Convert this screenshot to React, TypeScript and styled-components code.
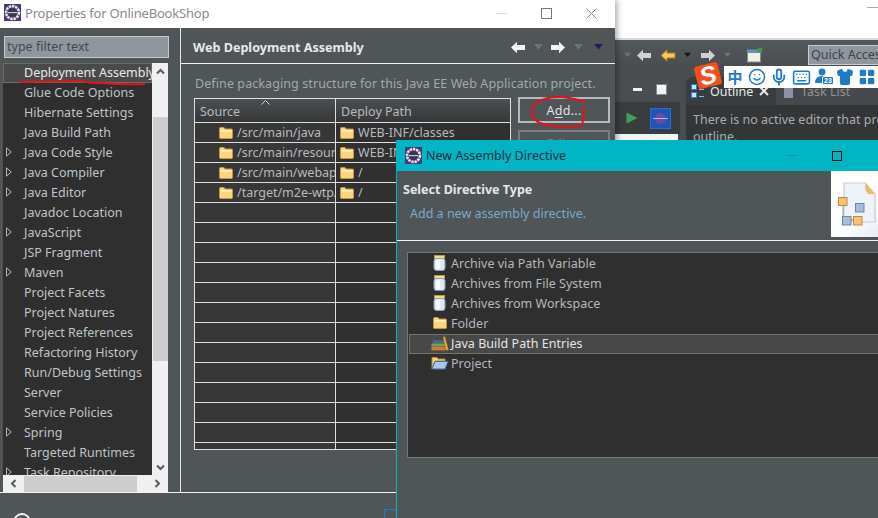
import styled, { createGlobalStyle } from "styled-components";
import { Keyboard, LayoutGrid, Mic, Shirt, Smile } from "lucide-react";

const GlobalStyle = createGlobalStyle`
  html, body {
    margin: 0;
    padding: 0;
    background: #505558;
  }
  * {
    box-sizing: border-box;
  }
  svg {
    flex: none;
  }
`;

const Desktop = styled.div`
  position: relative;
  width: 878px;
  height: 518px;
  overflow: hidden;
  background: #505558;
  font-family: "Noto Sans", "Open Sans", sans-serif;
  font-size: 12.5px;
`;

/* workbench window behind the dialogs */
const Workbench = styled.div`
  position: absolute;
  inset: 0;
  display: flex;
  flex-direction: column;
`;

const WorkbenchTitle = styled.div`
  height: 40px;
  flex: none;
  background: #fff;
  border-bottom: 2px solid #d8dadb;
  display: flex;
  justify-content: flex-end;
  padding: 7px 0 0 0;
`;

const MinDash = styled.div<{ $color: string }>`
  width: 11px;
  height: 1px;
  background: ${(p) => p.$color};
`;

const Toolbar = styled.div`
  height: 25px;
  flex: none;
  background: linear-gradient(#53585a, #4a4e50);
  padding: 5px 0 0 624px;
  display: flex;
  align-items: center;
`;

const ToolSlot = styled.div<{ $w: number }>`
  width: ${(p) => p.$w}px;
  flex: none;
  display: flex;
  align-items: center;
`;

const ToolDivider = styled.div`
  width: 1px;
  height: 20px;
  background: #85898b;
  margin-right: 8px;
`;

const QuickAccess = styled.div`
  margin-left: 45px;
  margin-top: 0;
  width: 90px;
  height: 20px;
  flex: none;
  background: #8f969e;
  border: 1px solid #c8cccf;
  color: #3d4246;
  font-size: 12.5px;
  line-height: 17px;
  padding-left: 2px;
  white-space: nowrap;
`;

const WorkArea = styled.div`
  flex: 1;
  display: flex;
  padding: 12px 0 0 615px;
  background: #494d4f;
  gap: 6px;
`;

const SideStack = styled.div`
  width: 65px;
  flex: none;
  display: flex;
  flex-direction: column;
`;

const SideTabs = styled.div`
  height: 25px;
  flex: none;
  display: flex;
  align-items: center;
  gap: 15px;
  padding: 0 0 0 18px;
  background: #4a4e50;
  border-top-right-radius: 8px;
`;

const MiniLine = styled.div`
  width: 9px;
  height: 3px;
  background: #f2f2f2;
`;

const MiniBox = styled.div`
  width: 9px;
  height: 9px;
  background: #f2f2f2;
  border-top: 3px solid #fff;
  outline: 1px solid #888;
`;

const SideRun = styled.div`
  height: 32px;
  flex: none;
  background: #3a3d40;
  display: flex;
  align-items: center;
  gap: 12px;
  padding-left: 11px;
`;

const SideStrip = styled.div`
  height: 8px;
  width: 63px;
  flex: none;
  background: #f4f4f4;
`;

const OutlinePanel = styled.div`
  flex: 1;
  display: flex;
  flex-direction: column;
  background: #333537;
  border-top-left-radius: 8px;
  overflow: hidden;
`;

const TabStrip = styled.div`
  height: 28px;
  flex: none;
  display: flex;
  background: #46494b;
`;

const ActiveTab = styled.div`
  width: 90px;
  display: flex;
  align-items: center;
  gap: 6px;
  padding: 0 0 0 5px;
  background: #3a3d3f;
  color: #e6e8e9;
  font-size: 12.5px;
`;

const IdleTab = styled.div`
  display: flex;
  align-items: center;
  gap: 8px;
  padding: 0 0 0 8px;
  color: #8f9396;
  font-size: 12.5px;
`;

const OutlineText = styled.div`
  padding: 6px 0 0 7px;
  color: #a9acae;
  font-size: 12.5px;
  line-height: 17px;
  width: 192px;
  white-space: nowrap;
`;

/* sogou input bar */
const ImeBar = styled.div`
  position: absolute;
  left: 724px;
  top: 66px;
  width: 154px;
  height: 22px;
  background: #fff;
  display: flex;
  align-items: center;
`;

const ImeLogo = styled.div`
  position: absolute;
  left: -28px;
  top: -2px;
  width: 24px;
  height: 23px;
  background: #f2511f;
  border-radius: 3px;
  transform: rotate(-14deg);
  color: #fff;
  font-family: "Liberation Sans", sans-serif;
  font-size: 25px;
  font-weight: 700;
  font-style: italic;
  line-height: 23px;
  text-align: center;
`;

const ImeSlot = styled.div`
  position: relative;
  width: 22px;
  flex: none;
  display: flex;
  justify-content: center;
  color: #1f78c8;
`;

const ImeChar = styled.span`
  font-family: "Noto Sans CJK SC", sans-serif;
  font-size: 15px;
  font-weight: 700;
  line-height: 20px;
`;

const ImeBadge = styled.span`
  position: absolute;
  left: 10px;
  top: 8px;
  width: 12px;
  height: 9px;
  background: #1f78c8;
  border: 1px solid #fff;
  border-radius: 2px;
  color: #fff;
  font-family: "Liberation Sans", sans-serif;
  font-size: 7px;
  font-weight: 700;
  line-height: 7px;
  text-align: center;
`;

/* properties window */
const PropertiesWindow = styled.div`
  position: absolute;
  left: 0;
  top: 0;
  width: 615px;
  height: 518px;
  background: #505558;
  box-shadow: 2px 0 6px rgba(0, 0, 0, 0.35);
  display: flex;
  flex-direction: column;
`;

const TitleBar = styled.div`
  height: 28px;
  flex: none;
  background: #fff;
  display: flex;
  align-items: center;
  gap: 4px;
  padding: 0 0 3px 4px;
  color: #8a8a8a;
  font-size: 13px;
  letter-spacing: -0.2px;
`;

const WinButtons = styled.div`
  margin-left: auto;
  margin-top: 1px;
  display: flex;
  align-items: center;
  gap: 34px;
  padding-right: 18px;
`;

const WinSquare = styled.div`
  width: 11px;
  height: 11px;
  border: 1px solid #777;
`;

const PropBody = styled.div`
  height: 465px;
  flex: none;
  display: flex;
  border-bottom: 1px solid #f2f2f2;
`;

const Sidebar = styled.div`
  width: 181px;
  flex: none;
  border-right: 1px solid #e8e8e8;
  padding: 8px 0 0 3px;
  display: flex;
  flex-direction: column;
`;

const FilterInput = styled.div`
  width: 165px;
  height: 22px;
  flex: none;
  margin-left: 1px;
  background: #8f969e;
  border: 1px solid #c6cacd;
  color: #444a50;
  font-size: 12.5px;
  line-height: 19px;
  padding-left: 2px;
`;

const TreeBox = styled.div`
  margin-top: 5px;
  height: 412px;
  width: 165px;
  flex: none;
  display: flex;
`;

const TreeList = styled.div`
  width: 149px;
  flex: none;
  overflow: hidden;
  background: #2f2f2f;
`;

const TreeRow = styled.div<{ $selected?: boolean }>`
  height: 20px;
  display: flex;
  align-items: center;
  padding: 0 0 2px 3px;
  color: ${(p) => (p.$selected ? "#e9e9e9" : "#bfc4c7")};
  background: ${(p) => (p.$selected ? "#4a4a4a" : "transparent")};
  box-shadow: ${(p) => (p.$selected ? "inset 0 0 0 1px #6d6d5e" : "none")};
  white-space: nowrap;
`;

const TreeArrow = styled.div`
  width: 18px;
  flex: none;
  display: flex;
  align-items: center;
`;

const ScrollV = styled.div`
  width: 16px;
  flex: none;
  background: #f0f0f0;
  display: flex;
  flex-direction: column;
  align-items: center;
  padding-top: 5px;
`;

const ScrollThumbV = styled.div`
  width: 15px;
  height: 244px;
  margin: 42px 0 0 1px;
  flex: none;
  background: #cdcdcd;
`;

const ScrollDown = styled.div`
  display: flex;
  margin-top: 103px;
`;

const ScrollH = styled.div`
  width: 165px;
  height: 17px;
  flex: none;
  background: #f0f0f0;
  display: flex;
  align-items: center;
  padding: 0 6px 0 6px;
`;

const ScrollThumbH = styled.div`
  width: 113px;
  height: 16px;
  margin: 0 auto 0 6px;
  background: #cdcdcd;
`;

const Main = styled.div`
  flex: 1;
  min-width: 0;
  display: flex;
  flex-direction: column;
`;

const PageHead = styled.div`
  height: 36px;
  flex: none;
  border-bottom: 1px solid #f0f0f0;
  display: flex;
  align-items: center;
  padding: 3px 7px 0 12px;
  color: #e8e9ea;
  font-size: 12.6px;
  font-weight: 700;
`;

const NavIcons = styled.div`
  margin-left: auto;
  display: flex;
  align-items: center;
`;

const NavSlot = styled.div`
  width: 20px;
  flex: none;
  display: flex;
  justify-content: center;
`;

const PageContent = styled.div`
  flex: 1;
  padding: 11px 5px 0 13px;
`;

const Description = styled.div`
  color: #a3a8ac;
  line-height: 18px;
  letter-spacing: 0.09px;
  margin-left: 1px;
  white-space: nowrap;
`;

const TableRowWrap = styled.div`
  display: flex;
  margin-top: 5px;
  gap: 7px;
`;

const Table = styled.div`
  width: 317px;
  height: 352px;
  flex: none;
  border: 1px solid #dedede;
  overflow: hidden;
`;

const Row = styled.div<{ $head?: boolean }>`
  height: ${(p) => (p.$head ? 24 : 20)}px;
  display: grid;
  grid-template-columns: 141px 1fr;
  border-bottom: 1px solid #dedede;
  background: ${(p) => (p.$head ? "linear-gradient(#4c5052, #353739)" : "transparent")};
`;

const Cell = styled.div<{ $first?: boolean; $head?: boolean }>`
  position: relative;
  display: flex;
  align-items: center;
  min-width: 0;
  overflow: hidden;
  white-space: nowrap;
  gap: 4px;
  padding-left: ${(p) => (p.$head ? 5 : p.$first ? 24 : 4)}px;
  padding-top: ${(p) => (p.$head ? 1 : 0)}px;
  border-right: ${(p) => (p.$first ? "1px solid #dedede" : "none")};
  color: #b6bbbf;
  background: ${(p) => (p.$head ? "transparent" : p.$first ? "#373738" : "#303031")};
`;

const SortCaret = styled.div`
  position: absolute;
  left: 66px;
  top: 1px;
  display: flex;
`;

const ButtonColumn = styled.div`
  width: 92px;
  flex: none;
  margin-top: -1px;
  display: flex;
  flex-direction: column;
  gap: 7px;
`;

const PushButton = styled.div<{ $disabled?: boolean }>`
  height: 26px;
  border: 2px solid ${(p) => (p.$disabled ? "#7b7f82" : "#b8bbbd")};
  color: ${(p) => (p.$disabled ? "#777b7e" : "#dfe1e2")};
  display: flex;
  align-items: center;
  justify-content: center;
  letter-spacing: 0.3px;
  u {
    text-underline-offset: 2px;
  }
`;

const Footer = styled.div`
  flex: 1;
  display: flex;
  align-items: flex-start;
  padding: 20px 0 0 13px;
`;

const DefaultButton = styled.div`
  width: 100px;
  height: 26px;
  margin: -4px 0 0 353px;
  border: 1px solid #1f78d0;
`;

const Annotation = styled.svg`
  position: absolute;
  left: 0;
  top: 0;
  pointer-events: none;
`;

/* directive dialog */
const Dialog = styled.div`
  position: absolute;
  left: 396px;
  top: 140px;
  width: 482px;
  height: 378px;
  overflow: hidden;
  background: #505558;
  border-left: 1px solid #01b5c5;
  display: flex;
  flex-direction: column;
`;

const DialogTitle = styled.div`
  height: 31px;
  flex: none;
  background: #01b5c5;
  display: flex;
  align-items: center;
  gap: 4px;
  padding-left: 8px;
  color: #0b2f35;
`;

const DialogButtons = styled.div`
  margin-left: auto;
  display: flex;
  align-items: center;
  gap: 34px;
  padding-right: 36px;
`;

const BlackSquare = styled.div`
  width: 10px;
  height: 10px;
  border: 1px solid #000;
`;

const DialogHead = styled.div`
  height: 70px;
  flex: none;
  display: flex;
  justify-content: space-between;
  border-bottom: 1px solid #f0f0f0;
`;

const HeadText = styled.div`
  padding: 10px 0 0 6px;
`;

const HeadTitle = styled.div`
  color: #e6e7e8;
  font-weight: 700;
  line-height: 18px;
`;

const HeadSub = styled.div`
  margin: 6px 0 0 7px;
  color: #7ba9c4;
  line-height: 18px;
`;

const HeadImage = styled.div`
  width: 47px;
  height: 66px;
  background: linear-gradient(135deg, #fff 60%, #e8ebf8);
  padding-top: 11px;
`;

const DirectiveList = styled.div`
  margin: 11px -10px 0 10px;
  height: 206px;
  background: #2f2f2f;
  border: 1px solid #73787b;
  border-right: none;
  padding: 1px 0 0 1px;
`;

const DirectiveRow = styled.div<{ $selected?: boolean }>`
  height: 20px;
  display: flex;
  align-items: center;
  padding: 0 0 2px 22px;
  gap: 3px;
  color: ${(p) => (p.$selected ? "#e4e5e6" : "#b4b9bc")};
  background: ${(p) => (p.$selected ? "#484848" : "transparent")};
  box-shadow: ${(p) => (p.$selected ? "inset 0 0 0 1px #74745f" : "none")};
  letter-spacing: 0.03px;
`;

const IconBox = styled.div`
  width: 17px;
  flex: none;
  display: flex;
  justify-content: center;
`;

const treeItems = [
  { label: "Glue Code Options" },
  { label: "Hibernate Settings" },
  { label: "Java Build Path" },
  { label: "Java Code Style", arrow: true },
  { label: "Java Compiler", arrow: true },
  { label: "Java Editor", arrow: true },
  { label: "Javadoc Location" },
  { label: "JavaScript", arrow: true },
  { label: "JSP Fragment" },
  { label: "Maven", arrow: true },
  { label: "Project Facets" },
  { label: "Project Natures" },
  { label: "Project References" },
  { label: "Refactoring History" },
  { label: "Run/Debug Settings" },
  { label: "Server" },
  { label: "Service Policies" },
  { label: "Spring", arrow: true },
  { label: "Targeted Runtimes" },
  { label: "Task Repository", arrow: true },
];

const assemblyRows = [
  { source: "/src/main/java", path: "WEB-INF/classes" },
  { source: "/src/main/resources", path: "WEB-INF/classes" },
  { source: "/src/main/webapp", path: "/" },
  { source: "/target/m2e-wtp/web-resources", path: "/" },
];

const emptyRows = Array.from({ length: 13 }, (_, i) => i);

const EclipseIcon = () => (
  <svg width="17" height="17" viewBox="0 0 17 17">
    <rect width="17" height="17" fill="#4b3a78" />
    <circle cx="8.5" cy="8.5" r="6.4" fill="none" stroke="#e8e8ea" strokeWidth="2.6" strokeDasharray="2.4 0.8" />
    <circle cx="8.5" cy="8.5" r="4.6" fill="#3a3650" />
    <rect x="4" y="8" width="9" height="1.2" fill="#c9c4dc" />
  </svg>
);

const FolderIcon = () => (
  <svg width="14" height="12" viewBox="0 0 14 12">
    <path d="M.5 2.5 V1.5 a1 1 0 0 1 1-1 H5 l1.2 1.5 H12.5 a1 1 0 0 1 1 1 V10.5 a1 1 0 0 1-1 1 H1.5 a1 1 0 0 1-1-1 Z" fill="#f8d583" stroke="#c9953f" />
    <rect x="1.5" y="3" width="11" height="1.6" fill="#fff0c4" />
  </svg>
);

const JarIcon = () => (
  <svg width="13" height="16" viewBox="0 0 13 16">
    <rect x="1.5" y="0.5" width="10" height="3" fill="#f3dc8c" stroke="#b89b45" />
    <rect x="1" y="3.5" width="11" height="12" rx="2.5" fill="#dfe8f6" stroke="#8d9fb8" />
    <rect x="3" y="5" width="4" height="9" rx="1.5" fill="#fff" />
  </svg>
);

const BooksIcon = () => (
  <svg width="18" height="15" viewBox="0 0 18 15">
    <rect x="0.5" y="11" width="14" height="3.4" fill="#cf7d35" />
    <rect x="0.5" y="7.4" width="14" height="3.2" fill="#7f9c58" />
    <rect x="2" y="4" width="12" height="3" fill="#3d6d86" />
    <path d="M12 1 L14 0.5 L17.5 14 L15 14.5 Z" fill="#f2b632" stroke="#8a6418" strokeWidth="0.6" />
  </svg>
);

const OpenFolderIcon = () => (
  <svg width="18" height="14" viewBox="0 0 18 14">
    <path d="M1 3 V1.5 h5 l1 1.5 h7 V5 H4 L1 12.5 Z" fill="#f5d284" stroke="#b88d3e" />
    <path d="M4 5.5 H17 L14 13 H1 Z" fill="#a9c7ea" stroke="#3f70ae" />
  </svg>
);

const BlockArrow = ({ fill, stroke, flip }: { fill: string; stroke?: string; flip?: boolean }) => (
  <svg width="16" height="13" viewBox="0 0 16 13" style={flip ? { transform: "scaleX(-1)" } : undefined}>
    <path d="M7 0.8 L1 6.5 L7 12.2 V9 H15 V4 H7 Z" fill={fill} stroke={stroke} strokeWidth={stroke ? 1 : 0} />
  </svg>
);

const DropCaret = ({ color, w = 9 }: { color: string; w?: number }) => (
  <svg width={w} height="6" viewBox="0 0 9 6">
    <path d="M0 0 H9 L4.5 5.5 Z" fill={color} />
  </svg>
);

const OpenTriangle = () => (
  <svg width="6" height="10" viewBox="0 0 6 10">
    <path d="M0.5 0.8 L5.2 5 L0.5 9.2 Z" fill="none" stroke="#b9bdc0" />
  </svg>
);

const Chevron = ({ dir }: { dir: "up" | "down" | "left" | "right" }) => {
  const rot = { up: 0, right: 90, down: 180, left: 270 }[dir];
  return (
    <svg width="9" height="7" viewBox="0 0 9 7" style={{ transform: `rotate(${rot}deg)` }}>
      <path d="M1 5.5 L4.5 2 L8 5.5" fill="none" stroke="#5a5a5a" strokeWidth="2" />
    </svg>
  );
};

const CloseCross = () => (
  <svg width="11" height="11" viewBox="0 0 11 11">
    <path d="M0.5 0.5 L10.5 10.5 M10.5 0.5 L0.5 10.5" stroke="#888" strokeWidth="1" />
  </svg>
);

const OutlineIcon = () => (
  <svg width="13" height="15" viewBox="0 0 13 15">
    <rect x="0.5" y="0.5" width="5" height="5" fill="#cfe4fb" stroke="#2f7fd0" />
    <rect x="0.5" y="8.5" width="5" height="5" fill="#cfe4fb" stroke="#2f7fd0" />
    <rect x="8" y="5" width="5" height="1" fill="#8fb8dc" />
    <rect x="8" y="12" width="5" height="1" fill="#8fb8dc" />
  </svg>
);

const DocImage = () => (
  <svg width="47" height="46" viewBox="0 0 47 46">
    <path d="M13 1 H34 L44 12 V40 H13 Z" fill="#eef2f9" stroke="#c7cdd8" strokeWidth="1.2" />
    <path d="M34 1 L44 12 H37 Q34 9 34 1 Z" fill="#f0b66b" />
    <path d="M12 22 V38 H22" fill="none" stroke="#8696ad" />
    <rect x="7.5" y="15.5" width="8.5" height="8" fill="#fbc274" stroke="#c08a42" />
    <rect x="24.5" y="21.5" width="8.5" height="8.5" fill="#a9bcd8" stroke="#6e87ad" />
    <rect x="11.5" y="34.5" width="8.5" height="8.5" fill="#a9bcd8" stroke="#6e87ad" />
    <rect x="22.5" y="34.5" width="8.5" height="8.5" fill="#fbc274" stroke="#c08a42" />
  </svg>
);

const HelpIcon = () => (
  <svg width="18" height="18" viewBox="0 0 18 18">
    <circle cx="9" cy="9" r="8" fill="none" stroke="#f2f2f2" strokeWidth="2" />
    <circle cx="9" cy="8" r="2.4" fill="none" stroke="#f2f2f2" strokeWidth="1.5" />
  </svg>
);

export default function App() {
  return (
    <Desktop>
      <GlobalStyle />
      <Workbench>
        <WorkbenchTitle>
          <MinDash $color="#aaa" />
        </WorkbenchTitle>
        <Toolbar>
          <ToolSlot $w={12}>
            <DropCaret color="#6f7376" w={7} />
          </ToolSlot>
          <ToolSlot $w={24}>
            <BlockArrow fill="#cfd1d3" />
          </ToolSlot>
          <ToolSlot $w={24}>
            <BlockArrow fill="#f7c65f" stroke="#b07a1c" />
          </ToolSlot>
          <ToolSlot $w={16}>
            <DropCaret color="#161616" w={7} />
          </ToolSlot>
          <ToolSlot $w={24}>
            <BlockArrow fill="#cfd1d3" flip />
          </ToolSlot>
          <ToolSlot $w={15}>
            <DropCaret color="#6f7376" w={7} />
          </ToolSlot>
          <ToolDivider />
          <svg width="16" height="16" viewBox="0 0 16 16">
            <rect x="0.5" y="3" width="13" height="12" fill="#f6f1df" stroke="#7b8ea3" />
            <rect x="0.5" y="3" width="13" height="3" fill="#5e93c6" />
            <circle cx="13" cy="3" r="2.5" fill="#3f9a4a" />
          </svg>
          <QuickAccess>Quick Access</QuickAccess>
        </Toolbar>
        <WorkArea>
          <SideStack>
            <SideTabs>
              <MiniLine />
              <MiniBox />
            </SideTabs>
            <SideRun>
              <svg width="12" height="12" viewBox="0 0 12 12">
                <path d="M0.5 0.5 L11.5 6 L0.5 11.5 Z" fill="#3da35a" />
              </svg>
              <svg width="21" height="21" viewBox="0 0 21 21">
                <rect width="21" height="21" fill="#1f55b8" stroke="#3a86d8" />
                <circle cx="10.5" cy="10.5" r="5.5" fill="#6a4aa8" />
                <rect x="3" y="10" width="15" height="0.8" fill="#d8d0f0" />
              </svg>
            </SideRun>
            <SideStrip />
          </SideStack>
          <OutlinePanel>
            <TabStrip>
              <ActiveTab>
                <OutlineIcon />
                Outline
                <svg width="10" height="10" viewBox="0 0 10 10">
                  <path d="M1 1 L9 9 M9 1 L1 9" stroke="#e8e8e8" strokeWidth="2" />
                </svg>
              </ActiveTab>
              <IdleTab>
                <svg width="9" height="13" viewBox="0 0 9 13">
                  <rect width="9" height="13" fill="#8d90a8" />
                </svg>
                Task List
              </IdleTab>
            </TabStrip>
            <OutlineText>
              There is no active editor that provides an
              <br />
              outline.
            </OutlineText>
          </OutlinePanel>
        </WorkArea>
      </Workbench>

      <ImeBar>
        <ImeLogo>S</ImeLogo>
        <ImeSlot>
          <ImeChar>中</ImeChar>
        </ImeSlot>
        <ImeSlot>
          <Smile size={18} strokeWidth={2} />
        </ImeSlot>
        <ImeSlot>
          <Mic size={18} strokeWidth={2.4} />
        </ImeSlot>
        <ImeSlot>
          <Keyboard size={19} strokeWidth={2} />
        </ImeSlot>
        <ImeSlot>
          <svg width="18" height="18" viewBox="0 0 18 18">
            <circle cx="8" cy="4" r="3.4" fill="#1f78c8" />
            <path d="M1 15 Q1 8 8 8 Q13 8 14 12 V15 Z" fill="#1f78c8" />
          </svg>
          <ImeBadge>23</ImeBadge>
        </ImeSlot>
        <ImeSlot>
          <Shirt size={18} fill="#1f78c8" strokeWidth={1.5} />
        </ImeSlot>
        <ImeSlot>
          <LayoutGrid size={18} fill="#1f78c8" strokeWidth={1.5} />
        </ImeSlot>
      </ImeBar>

      <PropertiesWindow>
        <TitleBar>
          <EclipseIcon />
          Properties for OnlineBookShop
          <WinButtons>
            <MinDash $color="#d8d8d8" />
            <WinSquare />
            <CloseCross />
          </WinButtons>
        </TitleBar>
        <PropBody>
          <Sidebar>
            <FilterInput>type filter text</FilterInput>
            <TreeBox>
              <TreeList>
                <TreeRow $selected>
                  <TreeArrow />
                  Deployment Assembly
                </TreeRow>
                {treeItems.map((item) => (
                  <TreeRow key={item.label}>
                    <TreeArrow>{item.arrow && <OpenTriangle />}</TreeArrow>
                    {item.label}
                  </TreeRow>
                ))}
              </TreeList>
              <ScrollV>
                <Chevron dir="up" />
                <ScrollThumbV />
                <ScrollDown>
                  <Chevron dir="down" />
                </ScrollDown>
              </ScrollV>
            </TreeBox>
            <ScrollH>
              <Chevron dir="left" />
              <ScrollThumbH />
              <Chevron dir="right" />
            </ScrollH>
          </Sidebar>
          <Main>
            <PageHead>
              Web Deployment Assembly
              <NavIcons>
                <NavSlot>
                  <BlockArrow fill="#f2f2f2" />
                </NavSlot>
                <NavSlot>
                  <DropCaret color="#6f7376" />
                </NavSlot>
                <NavSlot>
                  <BlockArrow fill="#f2f2f2" flip />
                </NavSlot>
                <NavSlot>
                  <DropCaret color="#6f7376" />
                </NavSlot>
                <NavSlot>
                  <DropCaret color="#2a1a5c" />
                </NavSlot>
              </NavIcons>
            </PageHead>
            <PageContent>
              <Description>Define packaging structure for this Java EE Web Application project.</Description>
              <TableRowWrap>
                <Table>
                  <Row $head>
                    <Cell $first $head>
                      Source
                      <SortCaret>
                        <svg width="9" height="5" viewBox="0 0 9 5">
                          <path d="M0.5 4.5 L4.5 0.5 L8.5 4.5" fill="none" stroke="#d8d8d8" />
                        </svg>
                      </SortCaret>
                    </Cell>
                    <Cell $head>Deploy Path</Cell>
                  </Row>
                  {assemblyRows.map((r) => (
                    <Row key={r.source}>
                      <Cell $first>
                        <FolderIcon />
                        {r.source}
                      </Cell>
                      <Cell>
                        <FolderIcon />
                        {r.path}
                      </Cell>
                    </Row>
                  ))}
                  {emptyRows.map((i) => (
                    <Row key={i}>
                      <Cell $first />
                      <Cell />
                    </Row>
                  ))}
                </Table>
                <ButtonColumn>
                  <PushButton>
                    <span>
                      A<u>d</u>d...
                    </span>
                  </PushButton>
                  <PushButton $disabled>Edit...</PushButton>
                </ButtonColumn>
              </TableRowWrap>
            </PageContent>
          </Main>
        </PropBody>
        <Footer>
          <HelpIcon />
          <DefaultButton />
        </Footer>
        <Annotation width="615" height="130" viewBox="0 0 615 130">
          <path d="M19 82 C40 81 60 82 73 81 C83 81 90 83 100 83 C115 84 130 85 145 84" fill="none" stroke="#e8101c" strokeWidth="1.8" />
          <path d="M586 102 C578 100 570 97 560 97 C548 97 536 100 533 107 C530 115 534 120 540 123 C550 127 570 128 582 125 C584 118 584 112 583 107" fill="none" stroke="#e8101c" strokeWidth="2" />
        </Annotation>
      </PropertiesWindow>

      <Dialog>
        <DialogTitle>
          <EclipseIcon />
          New Assembly Directive
          <DialogButtons>
            <MinDash $color="#1b8f9c" />
            <BlackSquare />
          </DialogButtons>
        </DialogTitle>
        <DialogHead>
          <HeadText>
            <HeadTitle>Select Directive Type</HeadTitle>
            <HeadSub>Add a new assembly directive.</HeadSub>
          </HeadText>
          <HeadImage>
            <DocImage />
          </HeadImage>
        </DialogHead>
        <DirectiveList>
          <DirectiveRow>
            <IconBox>
              <JarIcon />
            </IconBox>
            Archive via Path Variable
          </DirectiveRow>
          <DirectiveRow>
            <IconBox>
              <JarIcon />
            </IconBox>
            Archives from File System
          </DirectiveRow>
          <DirectiveRow>
            <IconBox>
              <JarIcon />
            </IconBox>
            Archives from Workspace
          </DirectiveRow>
          <DirectiveRow>
            <IconBox>
              <FolderIcon />
            </IconBox>
            Folder
          </DirectiveRow>
          <DirectiveRow $selected>
            <IconBox>
              <BooksIcon />
            </IconBox>
            Java Build Path Entries
          </DirectiveRow>
          <DirectiveRow>
            <IconBox>
              <OpenFolderIcon />
            </IconBox>
            Project
          </DirectiveRow>
        </DirectiveList>
      </Dialog>
    </Desktop>
  );
}
